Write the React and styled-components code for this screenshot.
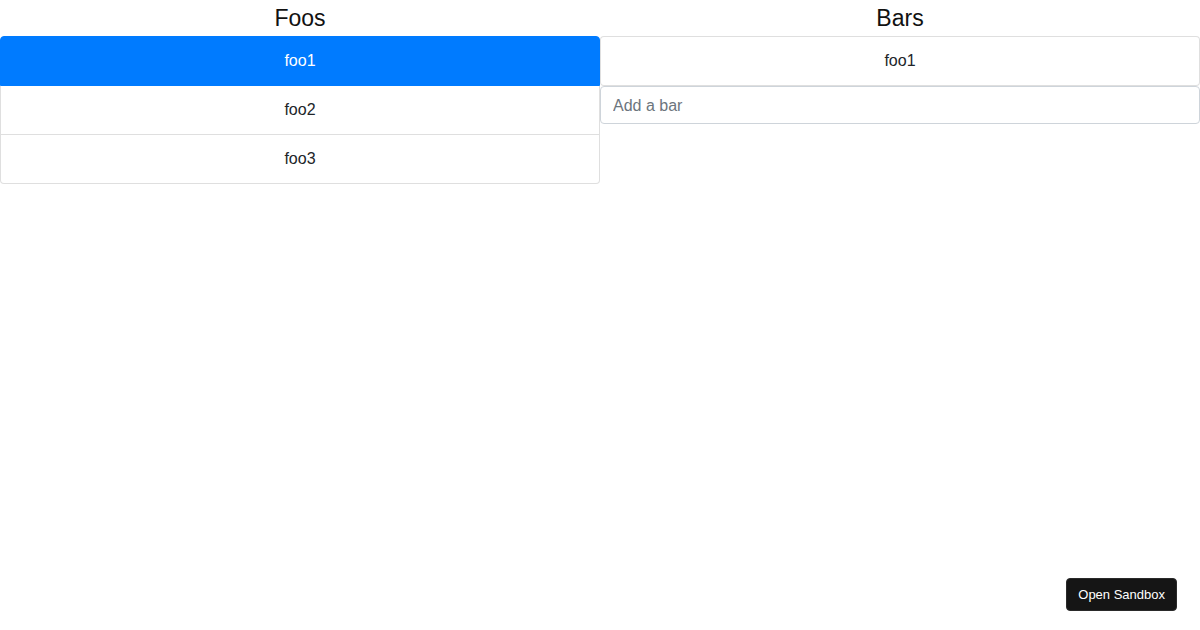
import React from "react";
import styled, { createGlobalStyle } from "styled-components";

const Global = createGlobalStyle`
  html, body { margin: 0; padding: 0; background: #fff; }
  body {
    font-family: "Liberation Sans", Arial, Helvetica, sans-serif;
    font-size: 16px;
    line-height: 1.5;
    color: #212529;
  }
  * { box-sizing: border-box; }
`;

const Columns = styled.div`
  display: grid;
  grid-template-columns: 1fr 1fr;
  width: 1200px;
`;

const Column = styled.section`
  display: flex;
  flex-direction: column;
`;

const Heading = styled.h3`
  margin: 0;
  font-size: 23px;
  font-weight: 400;
  line-height: 36px;
  text-align: center;
  color: #111;
`;

const ListGroup = styled.ul`
  list-style: none;
  margin: 0;
  padding: 0;
  display: flex;
  flex-direction: column;
`;

const Item = styled.li`
  padding: 12px 20px;
  text-align: center;
  line-height: 24px;
  border: 1px solid rgba(0, 0, 0, 0.125);
  background: ${(p) => (p.$active ? "#007bff" : "#fff")};
  color: ${(p) => (p.$active ? "#fff" : "#212529")};
  border-color: ${(p) => (p.$active ? "#007bff" : "rgba(0,0,0,0.125)")};
  & + & { border-top-width: 0; }
  &:first-child { border-top-left-radius: 4px; border-top-right-radius: 4px; }
  &:last-child { border-bottom-left-radius: 4px; border-bottom-right-radius: 4px; }
`;

const Input = styled.input`
  display: block;
  width: 100%;
  height: 38px;
  padding: 7px 12px 5px;
  font-family: inherit;
  font-size: 16px;
  line-height: 24px;
  color: #495057;
  background: #fff;
  border: 1px solid #ced4da;
  border-radius: 4px;
  outline: none;
  &::placeholder { color: #6c757d; opacity: 1; }
`;

const SandboxButton = styled.button`
  position: fixed;
  right: 23px;
  bottom: 19px;
  height: 33px;
  padding: 0 11px;
  background: #151515;
  color: #fff;
  border: 1px solid #2a2a2a;
  border-radius: 4px;
  font-family: "Liberation Sans", Arial, sans-serif;
  font-size: 13px;
  cursor: pointer;
`;

export default function App() {
  const foos = ["foo1", "foo2", "foo3"];
  return (
    <>
      <Global />
      <Columns>
        <Column>
          <Heading>Foos</Heading>
          <ListGroup>
            {foos.map((f, i) => (
              <Item key={f} $active={i === 0}>{f}</Item>
            ))}
          </ListGroup>
        </Column>
        <Column>
          <Heading>Bars</Heading>
          <ListGroup>
            <Item>foo1</Item>
          </ListGroup>
          <Input placeholder="Add a bar" />
        </Column>
      </Columns>
      <SandboxButton>Open Sandbox</SandboxButton>
    </>
  );
}
